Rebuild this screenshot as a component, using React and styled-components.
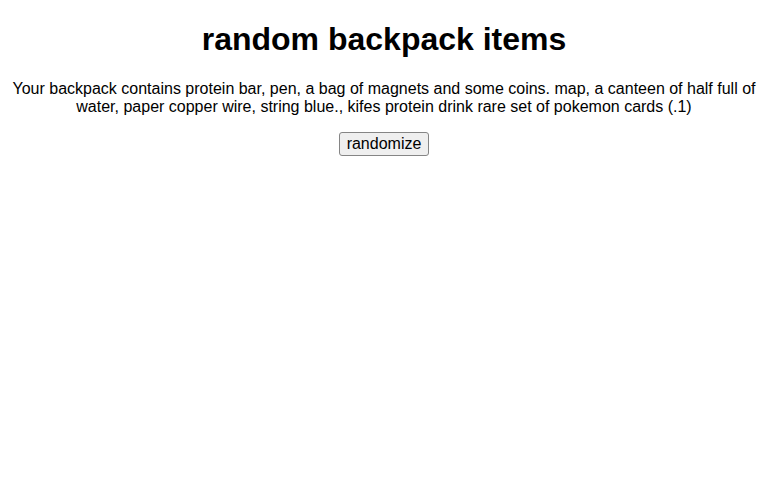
import { useState } from "react";
import styled, { createGlobalStyle } from "styled-components";

const GlobalStyle = createGlobalStyle`
  body {
    margin: 0;
    font-family: "Liberation Sans", Arial, sans-serif;
    color: #000;
    background: #fff;
  }
`;

const Page = styled.main`
  text-align: center;
`;

const Title = styled.h1`
  font-size: 32px;
  font-weight: bold;
  margin: 21.44px 0;
`;

const Items = styled.p`
  font-size: 16px;
  margin: 16px 0;
`;

const RandomizeButton = styled.button`
  font-family: "Liberation Sans", Arial, sans-serif;
  font-size: 16px;
  color: #000;
  background: #efefef;
  border: 1px solid #858585;
  border-radius: 3px;
  padding: 2px 7px;
  cursor: pointer;

  &:hover {
    background: #e5e5e5;
  }
`;

const pool = [
  "protein bar",
  "pen",
  "a bag of magnets and some coins.",
  "map",
  "a canteen of half full of water",
  "paper copper wire",
  "string blue.",
  "kifes protein drink rare set of pokemon cards (.1)",
];

const initial =
  "protein bar, pen, a bag of magnets and some coins. map, a canteen of half full of water, paper copper wire, string blue., kifes protein drink rare set of pokemon cards (.1)";

export default function App() {
  const [items, setItems] = useState(initial);

  const handleRandomize = () => {
    const picked = pool.filter(() => Math.random() > 0.4);
    setItems(picked.length ? picked.join(", ") : pool[0]);
  };

  return (
    <>
      <GlobalStyle />
      <Page>
        <Title>random backpack items</Title>
        <Items>{`Your backpack contains ${items}`}</Items>
        <RandomizeButton onClick={handleRandomize}>randomize</RandomizeButton>
      </Page>
    </>
  );
}
